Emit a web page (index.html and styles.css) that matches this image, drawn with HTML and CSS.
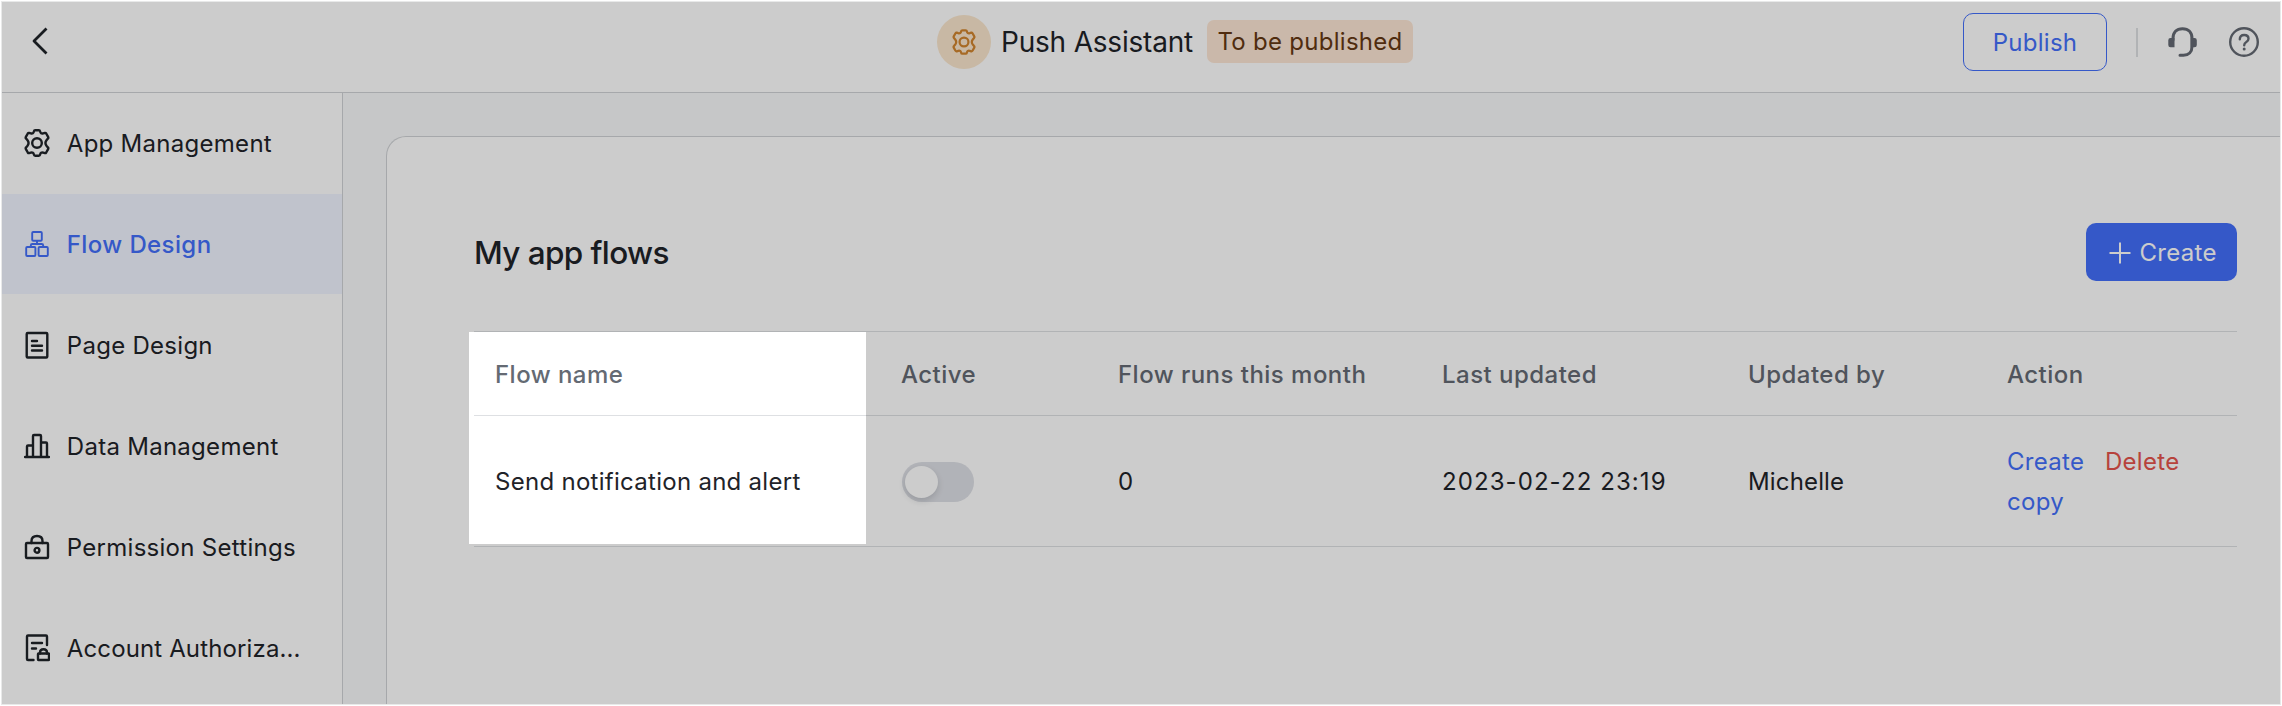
FILE: index.html
```html
<!DOCTYPE html>
<html lang="en">
<head>
<meta charset="utf-8">
<title>Push Assistant</title>
<link rel="stylesheet" href="styles.css">
</head>
<body>
<svg class="defs" aria-hidden="true">
  <symbol id="gear" viewBox="0 0 26 28">
    <path d="M9.900 2.400Q10.100 1.300 11.200 1.300H14.800Q15.900 1.300 16.100 2.400Q16.600 5.100 19.200 4.400L20.900 3.900Q21.700 3.700 22.200 4.500L24.100 7.900Q24.600 8.800 23.900 9.600L22.500 11.300Q20.400 14 22.500 16.700L23.900 18.400Q24.600 19.200 24.100 20.100L22.200 23.500Q21.700 24.300 20.900 24.100L19.200 23.600Q16.600 22.900 16.100 25.600Q15.900 26.700 14.800 26.700H11.200Q10.100 26.700 9.900 25.600Q9.400 22.900 6.800 23.600L5.100 24.100Q4.300 24.300 3.800 23.500L1.900 20.100Q1.400 19.200 2.100 18.400L3.500 16.700Q5.600 14 3.500 11.300L2.100 9.600Q1.400 8.800 1.900 7.900L3.800 4.500Q4.300 3.700 5.100 3.900L6.800 4.400Q9.400 5.100 9.900 2.400Z"/>
    <circle cx="13" cy="14" r="4.800"/>
  </symbol>
</svg>
<div class="frame">
  <header class="header">
    <svg class="back" viewBox="0 0 16 28"><path d="M14.500 1.500L2 14L14.500 26.500"/></svg>
    <div class="app">
      <span class="app-icon"><svg viewBox="0 0 26 28"><use href="#gear"/></svg></span>
      <span class="app-name">Push Assistant</span>
      <span class="tag">To be published</span>
    </div>
    <div class="tools">
      <button class="publish">Publish</button>
      <span class="divider"></span>
      <svg class="headset" viewBox="0 0 30 30"><path d="M5 13V11.500C5 5.500 8.500 1.700 14.500 1.700S24 5.500 24 11.500V19.500C24 25 20.500 28.300 15.500 28.300H12"/><path class="solid" d="M6.500 11H2.500Q.3 11 .3 13.200V18Q.3 20.200 2.500 20.200H6.500ZM22.700 11H26.500Q28.800 11 28.800 13.200V18Q28.800 20.200 26.500 20.200H22.700Z"/></svg>
      <svg class="help" viewBox="0 0 30 30"><circle cx="15" cy="15" r="13.800"/><path d="M10.800 12.300Q10.800 8 15.200 8Q19.500 8 19.500 11.700Q19.500 13.500 17.300 15Q15.200 16.300 15.200 18.200"/><circle class="dot" cx="15.200" cy="22" r="1.500"/></svg>
    </div>
  </header>
  <div class="body">
    <nav class="sidebar">
      <a class="item"><svg viewBox="0 0 26 28"><use href="#gear"/></svg><span>App Management</span></a>
      <a class="item active"><svg viewBox="0 0 26 28"><rect x="8.200" y="2" width="9.600" height="8.800" rx="1"/><path d="M13 11V14M6.800 17V15.500Q6.800 14 8.300 14H17.700Q19.200 14 19.200 15.500V17"/><rect x="2.200" y="17" width="9.200" height="9" rx="1"/><rect x="14.600" y="17" width="9.200" height="9" rx="1"/></svg><span>Flow Design</span></a>
      <a class="item"><svg viewBox="0 0 26 28"><rect x="2.700" y="2" width="20.600" height="24.500" rx="1"/><path d="M8 10H13M8 14.800H18M8 19.500H18"/></svg><span>Page Design</span></a>
      <a class="item"><svg viewBox="0 0 26 28"><path d="M1 25H25M3 25V14.500Q3 13.500 4 13.500H9V4Q9 3 10 3H16Q17 3 17 4V25M9 13.500V25M17 10.500H22Q23 10.500 23 11.500V25"/></svg><span>Data Management</span></a>
      <a class="item"><svg viewBox="0 0 26 28"><rect x="2" y="10" width="22" height="15" rx="1"/><path d="M7.500 10V8Q7.500 3 13 3T18.500 8V10"/><circle cx="13" cy="17.300" r="2.400"/></svg><span>Permission Settings</span></a>
      <a class="item"><svg viewBox="0 0 26 28"><path d="M9.500 26H4Q3 26 3 25V2.500Q3 1.500 4 1.500H22Q23 1.500 23 2.500V11M8 9H18M8 14.500H12"/><rect x="14" y="19.500" width="11" height="6.500" rx=".5"/><path d="M16 19.500V18.500Q16 15.200 19.500 15.200T23 18.500V19.500"/></svg><span class="long">Account Authoriza...</span></a>
    </nav>
    <main class="content">
      <section class="card">
        <div class="card-head">
          <h1>My app flows</h1>
          <button class="create"><svg viewBox="0 0 22 22"><path d="M11 .5V21.500M.5 11H21.500"/></svg><span>Create</span></button>
        </div>
        <div class="table">
          <div class="row head">
            <span>Flow name</span><span>Active</span><span>Flow runs this month</span><span>Last updated</span><span>Updated by</span><span>Action</span>
          </div>
          <div class="row data">
            <span>Send notification and alert</span><span><i class="switch"><i class="knob"></i></i></span><span>0</span><span class="date">2023-02-22 23:19</span><span class="user">Michelle</span>
            <span class="actions"><a class="copy">Create copy</a><a class="delete">Delete</a></span>
          </div>
        </div>
      </section>
    </main>
  </div>
  <div class="spotlight"></div>
</div>
</body>
</html>
```
FILE: styles.css
```css
* { box-sizing: border-box; }

body {
  margin: 0;
  padding: 2px;
  width: 2282px;
  height: 706px;
  overflow: hidden;
  background: #fff;
  font-family: Inter, "Noto Sans", sans-serif;
  font-size: 24px;
  line-height: 40px;
  letter-spacing: .28px;
  color: #1f2329;
}

.defs { position: absolute; width: 0; height: 0; }

svg {
  display: block;
  flex: none;
  fill: none;
  stroke: currentColor;
  stroke-width: 2.4;
  stroke-linecap: round;
  stroke-linejoin: round;
}

button {
  font: inherit;
  letter-spacing: inherit;
  height: 58px;
  padding: 1px 0 0;
  border-radius: 10px;
}

.frame {
  position: relative;
  width: 2278px;
  height: 702px;
  overflow: hidden;
  background: #fff;
  display: flex;
  flex-direction: column;
  outline: 1px solid #e8e9e9;
}

.header {
  height: 91px;
  flex: none;
  border-bottom: 1px solid #d0d3d6;
  display: flex;
  align-items: flex-start;
  padding: 11px 21px 0 30px;
}

.back { width: 16px; height: 28px; margin-top: 14px; stroke-width: 2.8; stroke-linecap: butt; }

.app { display: flex; align-items: center; margin: 2px 0 0 888.5px; height: 54px; }
.app-icon {
  width: 54px;
  height: 54px;
  border-radius: 50%;
  background: #fbe7cd;
  color: #d1852f;
  display: flex;
  align-items: center;
  justify-content: center;
}
.app-icon svg { width: 24px; height: 26px; }
.app-name { width: 204px; margin-left: 10.5px; font-size: 28px; letter-spacing: -.2px; white-space: nowrap; }
.tag {
  width: 206px;
  height: 43px;
  margin: 0 0 1px 2px;
  border-radius: 7px;
  background: #fde7d5;
  color: #643713;
  line-height: 44px;
  text-align: center;
  white-space: nowrap;
}

.tools { display: flex; align-items: center; margin-left: auto; height: 58px; }
.publish { width: 144px; border: 1px solid #436ffa; background: #fff; color: #436ffa; }
.divider { width: 2px; height: 29px; margin-left: 29px; background: #dee0e3; }
.headset { width: 30px; height: 30px; margin-left: 29.5px; color: #646a73; stroke-width: 3; }
.headset .solid { fill: currentColor; stroke: none; }
.help { width: 30px; height: 30px; margin-left: 31.5px; color: #646a73; }
.help .dot { fill: currentColor; stroke: none; }

.body { flex: 1; display: flex; min-height: 0; }

.sidebar {
  width: 341px;
  flex: none;
  border-right: 1px solid #d0d3d6;
  display: flex;
  flex-direction: column;
  gap: 1px;
}
.item {
  height: 100px;
  flex: none;
  display: flex;
  align-items: center;
  gap: 16.5px;
  padding: 0 0 0 22.3px;
  white-space: nowrap;
}
.item span { padding-top: 2px; }
.item svg { width: 26px; height: 28px; }
.item .long { letter-spacing: .13px; }
.item.active { background: #f0f4ff; color: #436ffa; font-weight: 500; letter-spacing: .4px; }
.item.active svg { stroke-width: 1.9; }

.content { flex: 1; background: #f8f9fb; padding: 43px 0 0 43px; }
.card {
  height: 600px;
  border: solid #d0d3d6;
  border-width: 1px 0 0 1px;
  border-top-left-radius: 20px;
  background: #fff;
  padding: 86px 43px 0 87px;
}
.card-head { display: flex; justify-content: space-between; align-items: center; height: 58px; }
h1 { margin: 0; padding-top: 2px; font-size: 31.5px; font-weight: 500; letter-spacing: -.6px; }
.create {
  width: 151px;
  border: 0;
  background: #436ffa;
  color: #fff;
  display: flex;
  align-items: center;
  gap: 9px;
  padding-left: 22.5px;
}
.create svg { width: 22px; height: 22px; stroke-width: 2; stroke-linecap: butt; }

.table { margin-top: 50px; border-top: 1px solid #dee0e3; }
.row {
  display: grid;
  grid-template-columns: 406px 217px 324px 306px 259px 1fr;
  align-items: center;
  padding-top: 2px;
  border-bottom: 1px solid #dee0e3;
  white-space: nowrap;
}
.row > span { padding-left: 21px; }
.head { height: 84px; color: #646a73; font-weight: 500; letter-spacing: .47px; }
.data { height: 131px; }
.date { letter-spacing: 1.08px; }
.user { letter-spacing: .15px; }

.switch {
  display: block;
  width: 72px;
  height: 40px;
  margin-left: 1px;
  padding: 4px 3px;
  border-radius: 20px;
  background: #dee0e6;
}
.knob {
  display: block;
  width: 33px;
  height: 32px;
  border-radius: 50%;
  background: #fff;
  box-shadow: 0 3px 6px rgba(31, 35, 41, .16);
}

.actions { display: flex; align-items: flex-start; }
.copy { width: 98px; white-space: normal; color: #436ffa; }
.delete { color: #e5534b; }

/* Dims everything except the flow name column. */
.spotlight {
  position: absolute;
  left: 467px;
  top: 330px;
  width: 397px;
  height: 212px;
  box-shadow: 0 0 0 3000px rgba(0, 0, 0, .2);
}
```
